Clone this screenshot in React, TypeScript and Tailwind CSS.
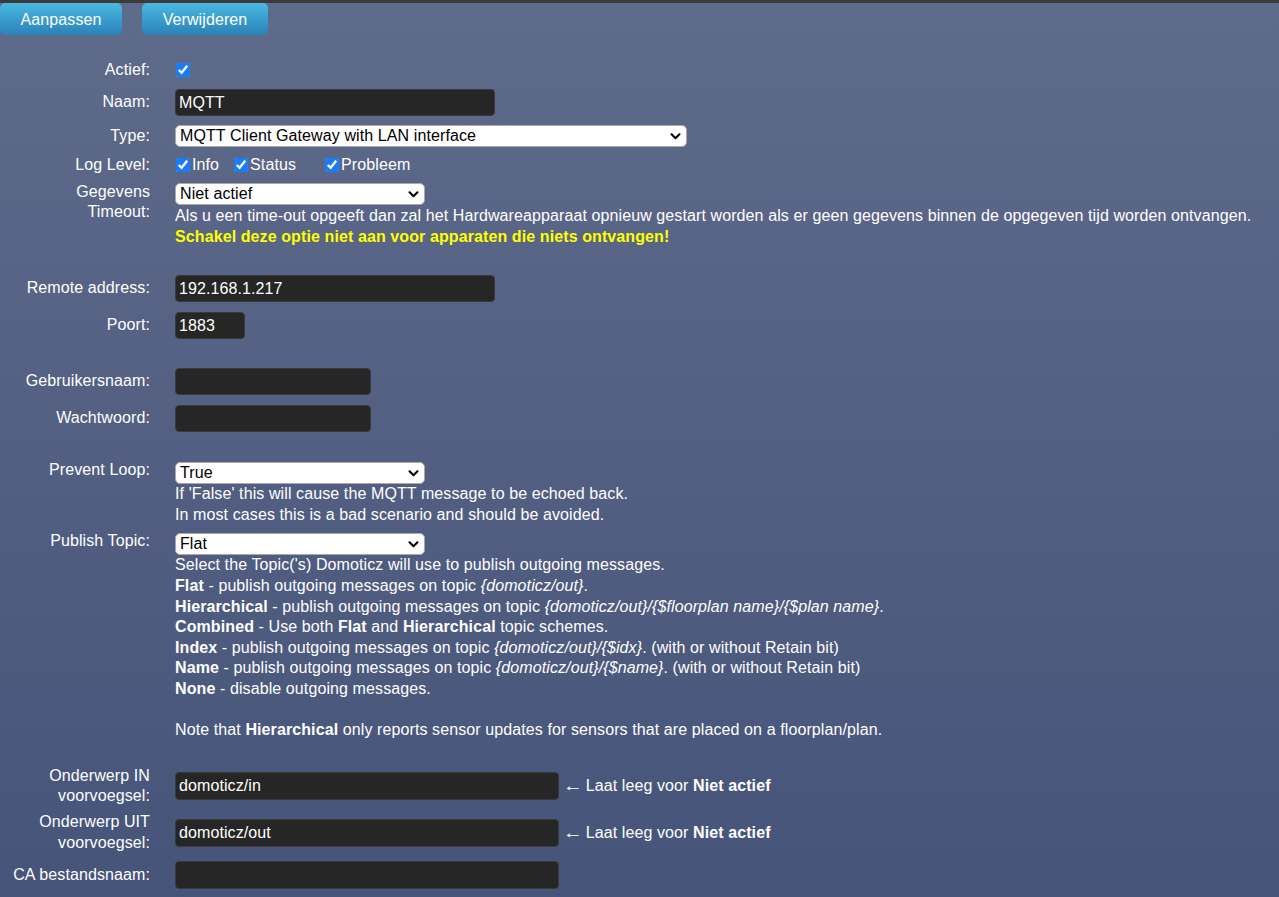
import type { ReactNode } from 'react';

function Row({
  label,
  className = '',
  align = 'items-center',
  labelClass = '',
  children,
}: {
  label: ReactNode;
  className?: string;
  align?: string;
  labelClass?: string;
  children: ReactNode;
}) {
  return (
    <div className={`flex ${align} ${className}`}>
      <div className={`w-[150px] shrink-0 text-right leading-[20.6px] ${labelClass}`}>{label}</div>
      <div className="ml-[25px] flex min-w-0 flex-col">{children}</div>
    </div>
  );
}

function TextInput({ value = '', width, height = 'h-[27px]' }: { value?: string; width: string; height?: string }) {
  return (
    <input
      type="text"
      defaultValue={value}
      className={`${width} ${height} block rounded-[4px] border border-[#3a3a3a] bg-[#262626] px-[3px] text-[16px] text-white outline-none`}
    />
  );
}

function Select({ value, width, className = '' }: { value: string; width: string; className?: string }) {
  return (
    <div className={`relative ${width} ${className}`}>
      <select
        defaultValue={value}
        className="block h-[22px] w-full appearance-none rounded-[5px] border border-[#a9a9a9] bg-white pl-[4px] pr-[20px] text-[16px] leading-[20px] text-black outline-none"
      >
        <option>{value}</option>
      </select>
      <svg
        viewBox="0 0 12 8"
        className="pointer-events-none absolute right-[6px] top-[8px] h-[7px] w-[11px]"
        fill="none"
        stroke="#000"
        strokeWidth="2.4"
        strokeLinecap="round"
        strokeLinejoin="round"
      >
        <path d="M1.5 1.5 6 6 10.5 1.5" />
      </svg>
    </div>
  );
}

function Check({ label }: { label?: string }) {
  return (
    <label className="flex items-center">
      <input type="checkbox" defaultChecked className="m-0 ml-[1px] h-[14px] w-[14px] accent-[#1a7cf7]" />
      {label && <span className="ml-[2px] leading-[20px]">{label}</span>}
    </label>
  );
}

function Suffix() {
  return (
    <span className="ml-[6px]">
      <span className="inline-block scale-x-[1.25]">←</span> Laat leeg voor <b>Niet actief</b>
    </span>
  );
}

export default function App() {
  return (
    <div
      className="min-h-screen bg-gradient-to-b from-[#5f6b8a] to-[#46547a] text-[16px] tracking-[0.1px] text-white"
      style={{ fontFamily: '"Liberation Sans", Arial, sans-serif' }}
    >
      <div className="h-[3px] bg-[#3b3b3b]" />
      <div className="flex gap-[20px]">
        <button className="h-[32px] w-[122px] rounded-[5px] bg-gradient-to-b from-[#4bb9e2] to-[#2a82b8] pt-[1px] text-white">Aanpassen</button>
        <button className="h-[32px] w-[126px] rounded-[5px] bg-gradient-to-b from-[#4bb9e2] to-[#2a82b8] pt-[1px] text-white">Verwijderen</button>
      </div>

      <div className="pb-[8px]">
        <Row label="Actief:" className="mt-[25px] h-[20px]">
          <Check />
        </Row>
        <Row label="Naam:" className="mt-[9px]">
          <TextInput value="MQTT" width="w-[320px]" />
        </Row>
        <Row label="Type:" className="mt-[9px]">
          <Select value="MQTT Client Gateway with LAN interface" width="w-[512px]" />
        </Row>
        <Row label="Log Level:" className="mt-[8px] h-[20px]">
          <div className="flex items-center">
            <Check label="Info" />
            <span className="ml-[14px]"><Check label="Status" /></span>
            <span className="ml-[28px]"><Check label="Probleem" /></span>
          </div>
        </Row>
        <Row label={<>Gegevens<br />Timeout:</>} align="items-start" labelClass="-mt-[1px] leading-[20px]" className="mt-[8px]">
          <div className="leading-[20.6px]">
            <Select value="Niet actief" width="w-[250px]" className="mb-[1px]" />
            <div>Als u een time-out opgeeft dan zal het Hardwareapparaat opnieuw gestart worden als er geen gegevens binnen de opgegeven tijd worden ontvangen.</div>
            <div className="font-bold text-[#ffff00]">Schakel deze optie niet aan voor apparaten die niets ontvangen!</div>
          </div>
        </Row>

        <Row label="Remote address:" className="mt-[28px]">
          <TextInput value="192.168.1.217" width="w-[320px]" />
        </Row>
        <Row label="Poort:" className="mt-[10px]">
          <TextInput value="1883" width="w-[70px]" />
        </Row>

        <Row label="Gebruikersnaam:" className="mt-[29px]">
          <TextInput width="w-[196px]" />
        </Row>
        <Row label="Wachtwoord:" className="mt-[10px]">
          <TextInput width="w-[196px]" />
        </Row>

        <Row label="Prevent Loop:" align="items-start" labelClass="-mt-[2px]" className="mt-[30px]">
          <div className="leading-[20.6px]">
            <Select value="True" width="w-[250px]" />
            <div>If 'False' this will cause the MQTT message to be echoed back.</div>
            <div>In most cases this is a bad scenario and should be avoided.</div>
          </div>
        </Row>
        <Row label="Publish Topic:" align="items-start" labelClass="-mt-[2px]" className="mt-[8px]">
          <div className="leading-[20.6px]">
            <Select value="Flat" width="w-[250px]" />
            <div>Select the Topic('s) Domoticz will use to publish outgoing messages.</div>
            <div><b>Flat</b> - publish outgoing messages on topic <i>{'{domoticz/out}'}</i>.</div>
            <div><b>Hierarchical</b> - publish outgoing messages on topic <i>{'{domoticz/out}/{$floorplan name}/{$plan name}'}</i>.</div>
            <div><b>Combined</b> - Use both <b>Flat</b> and <b>Hierarchical</b> topic schemes.</div>
            <div><b>Index</b> - publish outgoing messages on topic <i>{'{domoticz/out}/{$idx}'}</i>. (with or without Retain bit)</div>
            <div><b>Name</b> - publish outgoing messages on topic <i>{'{domoticz/out}/{$name}'}</i>. (with or without Retain bit)</div>
            <div><b>None</b> - disable outgoing messages.</div>
            <div className="h-[20.6px]" />
            <div>Note that <b>Hierarchical</b> only reports sensor updates for sensors that are placed on a floorplan/plan.</div>
          </div>
        </Row>

        <Row label={<>Onderwerp IN<br />voorvoegsel:</>} className="mt-[25px]">
          <div className="flex items-center">
            <TextInput value="domoticz/in" width="w-[384px]" height="h-[28px]" />
            <Suffix />
          </div>
        </Row>
        <Row label={<>Onderwerp UIT<br />voorvoegsel:</>} className="mt-[5px]">
          <div className="flex items-center">
            <TextInput value="domoticz/out" width="w-[384px]" height="h-[28px]" />
            <Suffix />
          </div>
        </Row>
        <Row label="CA bestandsnaam:" className="mt-[8px]">
          <TextInput width="w-[384px]" height="h-[28px]" />
        </Row>
      </div>
    </div>
  );
}
